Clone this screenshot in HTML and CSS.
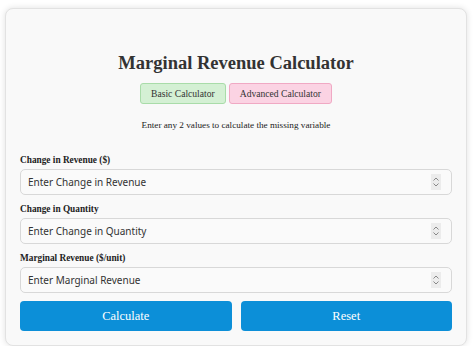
FILE: index.html
```html
<!DOCTYPE html>
<html>
<head>
<meta charset="utf-8">
<link rel="stylesheet" href="styles.css">
</head>
<body>
<div class="card">
  <h1 class="title">Marginal Revenue Calculator</h1>
  <div class="tabs">
    <button class="tab tab-basic">Basic Calculator</button>
    <button class="tab tab-adv">Advanced Calculator</button>
  </div>
  <p class="hint">Enter any 2 values to calculate the missing variable</p>
  <div class="field">
    <label class="label">Change in Revenue ($)</label>
    <div class="input-wrap">
      <input class="input" type="text" placeholder="Enter Change in Revenue">
      <span class="spin"><svg width="8" height="12" viewBox="0 0 8 12"><path d="M1.5 4.5 L4 2 L6.5 4.5 M1.5 7.5 L4 10 L6.5 7.5" fill="none" stroke="#888" stroke-width="1"/></svg></span>
    </div>
  </div>
  <div class="field">
    <label class="label">Change in Quantity</label>
    <div class="input-wrap">
      <input class="input" type="text" placeholder="Enter Change in Quantity">
      <span class="spin"><svg width="8" height="12" viewBox="0 0 8 12"><path d="M1.5 4.5 L4 2 L6.5 4.5 M1.5 7.5 L4 10 L6.5 7.5" fill="none" stroke="#888" stroke-width="1"/></svg></span>
    </div>
  </div>
  <div class="field">
    <label class="label">Marginal Revenue ($/unit)</label>
    <div class="input-wrap">
      <input class="input" type="text" placeholder="Enter Marginal Revenue">
      <span class="spin"><svg width="8" height="12" viewBox="0 0 8 12"><path d="M1.5 4.5 L4 2 L6.5 4.5 M1.5 7.5 L4 10 L6.5 7.5" fill="none" stroke="#888" stroke-width="1"/></svg></span>
    </div>
  </div>
  <div class="actions">
    <button class="btn">Calculate</button>
    <button class="btn">Reset</button>
  </div>
</div>
</body>
</html>
```

FILE: styles.css
```css
* { box-sizing: border-box; }
html, body { margin: 0; padding: 0; background: #fff; }
body { font-family: "Liberation Serif", "Times New Roman", serif; color: #333; }
.card {
  margin: 8px 7px 0 5px;
  background: #f9f9f9;
  border: 1px solid #e2e2e2;
  border-radius: 8px;
  box-shadow: 0 0 6px rgba(0,0,0,0.12);
  padding: 42px 14px 15px 14px;
  height: 338px;
}
.title {
  margin: 0;
  text-align: center;
  font-size: 18.5px;
  font-weight: bold;
  line-height: 24px;
  color: #333;
}
.tabs {
  display: flex;
  justify-content: center;
  gap: 3px;
  margin-top: 8px;
}
.tab {
  font-family: "Liberation Serif", serif;
  font-size: 9.6px;
  color: #333;
  height: 21px;
  padding: 0 10px;
  border-radius: 3px;
  cursor: pointer;
}
.tab-basic { background: #d4f0d4; border: 1px solid #a9dca9; }
.tab-adv { background: #fbd3e3; border: 1px solid #f0a9c4; }
.hint {
  text-align: center;
  font-size: 9.2px;
  margin: 15px 0 0 0;
  line-height: 12px;
  color: #222;
}
.field { margin-top: 23px; }
.field + .field { margin-top: 8px; }
.label {
  display: block;
  font-weight: bold;
  font-size: 9.3px;
  line-height: 12px;
  color: #222;
  margin-bottom: 3px;
}
.input-wrap {
  display: flex;
  align-items: center;
  height: 26px;
  background: #fafafa;
  border: 1px solid #d8d8d8;
  border-radius: 5px;
  padding: 0 10px 0 7px;
}
.input {
  flex: 1;
  border: 0;
  background: transparent;
  outline: none;
  font-family: "Noto Sans", sans-serif;
  font-size: 10px;
  color: #333;
  padding: 0;
}
.input::placeholder { color: #333; }
.spin {
  width: 10px;
  height: 16px;
  background: #ececec;
  display: flex;
  align-items: center;
  justify-content: center;
}
.actions {
  display: flex;
  gap: 9px;
  margin-top: 8px;
}
.btn {
  flex: 1;
  height: 30px;
  background: #0c8fd8;
  color: #fff;
  border: 0;
  border-radius: 4px;
  font-family: "Liberation Serif", serif;
  font-size: 12.5px;
  cursor: pointer;
}
```
